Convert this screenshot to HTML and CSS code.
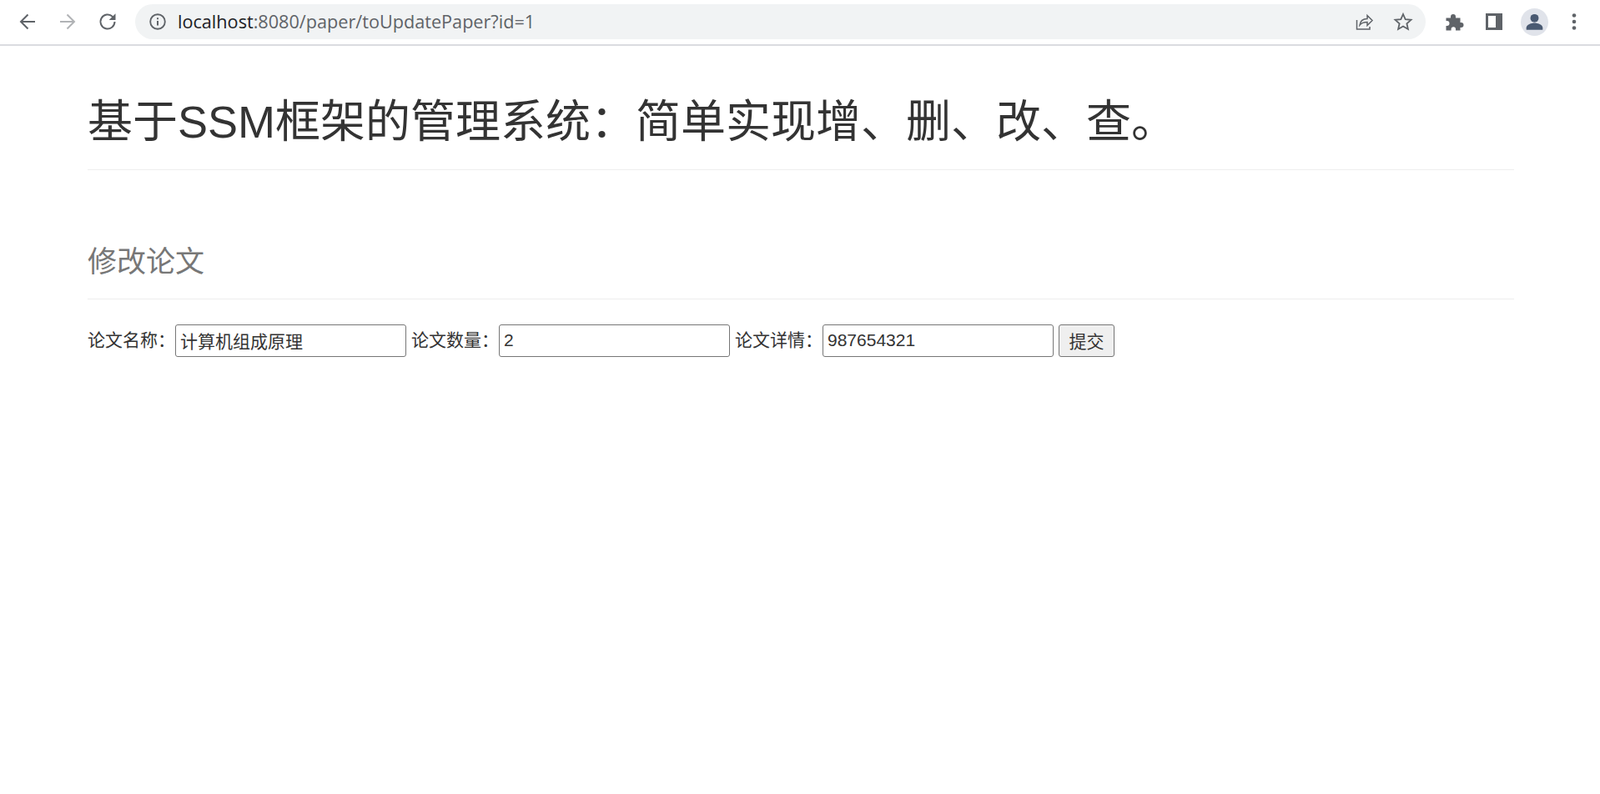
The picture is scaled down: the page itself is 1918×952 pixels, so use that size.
FILE: index.html
```html
<!DOCTYPE html>
<html lang="zh-CN">
<head>
<meta charset="utf-8">
<title>修改论文</title>
<link rel="stylesheet" href="styles.css">
</head>
<body>
<header class="toolbar">
  <div class="nav">
    <svg class="ic" viewBox="0 0 24 24"><path d="M21 12H4.500M12.500 3.500 4 12l8.500 8.500" fill="none" stroke="#5f6368" stroke-width="2"/></svg>
    <svg class="ic" viewBox="0 0 24 24"><path d="M3 12h16.500M11.500 3.500 20 12l-8.500 8.500" fill="none" stroke="#b1b3b6" stroke-width="2"/></svg>
    <svg class="ic" viewBox="0 0 24 24"><path d="M20.500 12a8.500 8.500 0 1 1-2.500-6l2.500 2.700" fill="none" stroke="#5f6368" stroke-width="2"/><path d="M21.500 2.200V10h-7.800z" fill="#5f6368"/></svg>
  </div>
  <div class="omnibox">
    <svg class="info" viewBox="0 0 20 20"><circle cx="10" cy="10" r="8" fill="none" stroke="#5f6368" stroke-width="1.700"/><path d="M9.100 9h1.800v5.200H9.100zM9.100 5.600h1.800v1.800H9.100z" fill="#5f6368"/></svg>
    <div class="url"><span class="host">localhost</span>:8080/paper/toUpdatePaper?id=1</div>
    <svg class="ic share" viewBox="0 0 24 24"><path d="M3.500 10v11h15.500v-3M7 16c.6-4.500 4-7.500 9-7.500V4.500l6 6-6 6v-4c-4 0-7 1-9 3.500z" fill="none" stroke="#5f6368" stroke-width="1.500"/></svg>
    <svg class="ic star" viewBox="0 0 24 24"><path d="m12 3 2.700 6.200 6.800.6-5.100 4.500 1.500 6.700-5.900-3.500-5.900 3.500 1.500-6.700-5.100-4.500 6.800-.6z" fill="none" stroke="#5f6368" stroke-width="1.800"/></svg>
  </div>
  <div class="tools">
    <svg class="ic" viewBox="0 0 24 24"><path d="M2.500 7.500h5.500V6a3 3 0 0 1 6 0v1.500h5.500V13h1a3 3 0 0 1 0 6h-1v3.500H14V21a2.700 2.700 0 0 0-5.400 0v1.500H2.500V17h1a3 3 0 0 0 0-6h-1z" fill="#5f6368"/></svg>
    <svg class="ic" viewBox="0 0 24 24"><path fill-rule="evenodd" d="M2 2h20v20H2zm3 3v14h9V5z" fill="#5f6368"/></svg>
    <div class="avatar">
      <svg viewBox="0 0 32 32"><circle cx="16" cy="11.500" r="4.800" fill="#4a5a72"/><path d="M6.500 25v-2.500c0-3.500 6-5.500 9.500-5.500s9.500 2 9.500 5.500V25z" fill="#4a5a72"/></svg>
    </div>
    <svg class="ic dots" viewBox="0 0 24 24"><circle cx="12" cy="4.500" r="2.300" fill="#5f6368"/><circle cx="12" cy="12" r="2.300" fill="#5f6368"/><circle cx="12" cy="19.500" r="2.300" fill="#5f6368"/></svg>
  </div>
</header>
<main class="container">
  <div class="page-header">
    <h1 class="title">基于SSM框架的管理系统：简单实现增、删、改、查。</h1>
  </div>
  <div class="page-header sub">
    <h1 class="title"><small class="subtitle">修改论文</small></h1>
  </div>
  <form class="form">
    <label>论文名称：</label><input type="text" value="计算机组成原理">
    <label>论文数量：</label><input type="text" value="2">
    <label>论文详情：</label><input type="text" value="987654321">
    <button type="button">提交</button>
  </form>
</main>
</body>
</html>
```
FILE: styles.css
```css
* { box-sizing: border-box; }
html, body { margin: 0; padding: 0; background: #fff; }
body {
  font-family: "Liberation Sans", "Noto Sans CJK SC", sans-serif;
  font-size: 21px;
  line-height: 30px;
  color: #333;
  height: 952px;
  overflow: hidden;
}
.toolbar {
  display: flex;
  align-items: center;
  height: 55px;
  border-bottom: 2px solid #dadce0;
  padding: 0 0 1px 21px;
}
.nav { display: flex; gap: 24px; align-items: center; width: 141px; }
.ic { width: 24px; height: 24px; display: block; flex: none; }
.omnibox {
  width: 1547px;
  height: 42px;
  border-radius: 21px;
  background: #f1f3f4;
  display: flex;
  align-items: center;
  padding: 0 15px 0 16px;
}
.info { width: 22px; height: 22px; flex: none; }
.url {
  flex: 1;
  margin-left: 13px;
  font-family: "Open Sans", "Liberation Sans", sans-serif;
  font-size: 21.650px;
  line-height: 24px;
  color: #5f6368;
}
.host { color: #202124; }
.share { margin-right: 23px; }
.tools { display: flex; align-items: center; margin-left: 22px; gap: 24px; }
.avatar {
  width: 33px;
  height: 33px;
  border-radius: 50%;
  background: #e0e3ea;
  margin-left: -4px;
}
.avatar svg { width: 33px; height: 33px; display: block; }
.dots { margin-left: -5px; }
.container { padding: 0 103px 0 105px; }
.page-header {
  margin: 60px 0 30px;
  padding-bottom: 13.500px;
  border-bottom: 1.500px solid #eee;
}
.page-header .title { padding-top: 2px; margin-bottom: 13px; }
.sub { height: 95px; }
.sub .title { padding-top: 14px; margin-bottom: 0; }
.title {
  margin: 0;
  font-size: 54px;
  font-weight: 400;
  line-height: 59.400px;
  color: #333;
}
.subtitle { font-size: 35px; font-weight: 400; line-height: 1; color: #777; }
.form { margin: 0; display: flex; align-items: center; }
.form label { font-weight: 400; }
.form input {
  width: 277px;
  height: 39px;
  margin-right: 6px;
  padding: 1.500px 5px;
  border: 1px solid #767676;
  border-radius: 3px;
  font: inherit;
  line-height: normal;
  color: #333;
}
.form button {
  width: 67px;
  height: 39px;
  padding: 0;
  border: 1px solid #767676;
  border-radius: 3px;
  background: #efefef;
  font: inherit;
  line-height: normal;
  color: #333;
}
```
